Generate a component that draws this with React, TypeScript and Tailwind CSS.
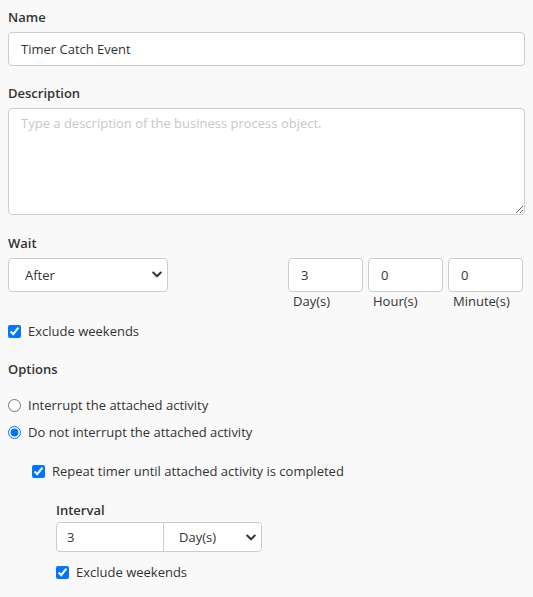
import React from "react";

function Chevron({ className = "" }: { className?: string }) {
  return (
    <svg width="10" height="7" viewBox="0 0 10 7" className={className} aria-hidden>
      <polyline points="1.2,1.5 5,5.2 8.8,1.5" fill="none" stroke="#333" strokeWidth="2" strokeLinecap="round" strokeLinejoin="round" />
    </svg>
  );
}

export default function App() {
  return (
    <div className="min-h-[597px] w-[533px] bg-[#f9f9f9] px-2 pt-2 font-['Open_Sans',sans-serif] text-[13px] leading-[18px] text-[#333]">
      {/* Name */}
      <div className="font-semibold">Name</div>
      <input
        defaultValue="Timer Catch Event"
        className="mt-[6px] block h-[34px] w-[517px] rounded-[4px] border border-[#ccc] bg-white px-[12px] text-[13px] text-[#333] outline-none"
      />

      {/* Description */}
      <div className="mt-[18px] font-semibold">Description</div>
      <textarea
        placeholder="Type a description of the business process object."
        className="mt-[6px] block h-[107px] w-[517px] rounded-[4px] border border-[#ccc] bg-white px-[12px] pt-[5px] text-[13px] text-[#333] outline-none placeholder:text-[#c8c8c8]"
      />

      {/* Wait */}
      <div className="mt-[19px] font-semibold">Wait</div>
      <div className="mt-[6px] flex w-[517px] items-start justify-between">
        <div className="relative h-[34px] w-[160px]">
          <select className="h-full w-full appearance-none rounded-[4px] border border-[#ccc] bg-white pl-[16px] text-[13px] text-[#333] outline-none">
            <option>After</option>
            <option>Before</option>
          </select>
          <Chevron className="pointer-events-none absolute right-[6px] top-[13px]" />
        </div>
        <div className="mr-[2px] flex gap-[5px]">
          {[
            ["3", "Day(s)"],
            ["0", "Hour(s)"],
            ["0", "Minute(s)"],
          ].map(([v, l]) => (
            <div key={l} className="flex w-[75px] flex-col">
              <input
                defaultValue={v}
                className="h-[34px] w-[75px] rounded-[4px] border border-[#ccc] bg-white px-[12px] text-[13px] text-[#333] outline-none"
              />
              <span className="pl-[5px]">{l}</span>
            </div>
          ))}
        </div>
      </div>

      <label className="mt-[12px] flex h-[18px] items-center gap-[7px]">
        <input type="checkbox" defaultChecked className="h-[13px] w-[13px]" />
        <span>Exclude weekends</span>
      </label>

      {/* Options */}
      <div className="mt-[20px] font-semibold">Options</div>
      <label className="mt-[18px] flex h-[18px] items-center gap-[7px]">
        <input type="radio" name="opt" className="h-[13px] w-[13px]" />
        <span>Interrupt the attached activity</span>
      </label>
      <label className="mt-[9px] flex h-[18px] items-center gap-[7px]">
        <input type="radio" name="opt" defaultChecked className="h-[13px] w-[13px]" />
        <span>Do not interrupt the attached activity</span>
      </label>

      <div className="pl-[24px]">
        <label className="mt-[21px] flex h-[18px] items-center gap-[7px]">
          <input type="checkbox" defaultChecked className="h-[13px] w-[13px]" />
          <span>Repeat timer until attached activity is completed</span>
        </label>

        <div className="pl-[24px]">
          <div className="mt-[21px] font-semibold">Interval</div>
          <div className="mt-[3px] flex h-[30px] w-[206px] rounded-[4px] border border-[#ccc] bg-white">
            <input
              defaultValue="3"
              className="h-full w-[107px] rounded-l-[4px] border-r border-[#ccc] pl-[10px] text-[13px] text-[#333] outline-none"
            />
            <div className="relative h-full flex-1">
              <select className="h-full w-full appearance-none rounded-r-[4px] bg-white pl-[15px] text-[13px] text-[#333] outline-none">
                <option>Day(s)</option>
                <option>Hour(s)</option>
                <option>Minute(s)</option>
              </select>
              <Chevron className="pointer-events-none absolute right-[5px] top-[11px]" />
            </div>
          </div>
          <label className="mt-[11px] flex h-[18px] items-center gap-[7px]">
            <input type="checkbox" defaultChecked className="h-[13px] w-[13px]" />
            <span>Exclude weekends</span>
          </label>
        </div>
      </div>
    </div>
  );
}
